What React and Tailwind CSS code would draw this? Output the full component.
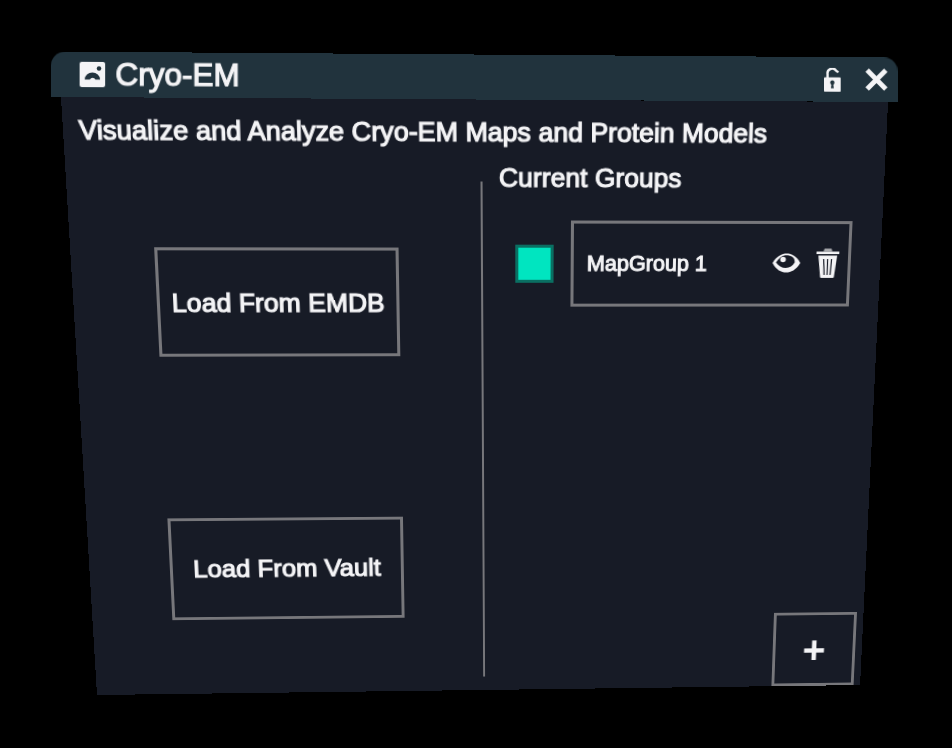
import React from "react";

// Maps a flat w×h element (at flow offset ox, oy) on to the quad it occupies in the perspective view.
function warp(w, h, ox, oy, q) {
  const [[x0, y0], [x1, y1], [x2, y2], [x3, y3]] = q.map(([x, y]) => [x - ox, y - oy]);
  const dx1 = x1 - x2, dx2 = x3 - x2, sx = x0 - x1 + x2 - x3;
  const dy1 = y1 - y2, dy2 = y3 - y2, sy = y0 - y1 + y2 - y3;
  const det = dx1 * dy2 - dx2 * dy1;
  const g = (sx * dy2 - dx2 * sy) / det;
  const k = (dx1 * sy - sx * dy1) / det;
  const a = x1 - x0 + g * x1, b = x3 - x0 + k * x3;
  const d = y1 - y0 + g * y1, e = y3 - y0 + k * y3;
  return {
    transform: `matrix3d(${[a / w, d / w, 0, g / w, b / h, e / h, 0, k / h, 0, 0, 1, 0, x0, y0, 0, 1].join(",")})`,
  };
}

const titleQuad = [[51, 51.5], [897.5, 57.5], [897.5, 102], [51, 97]];
const bodyQuad = [[61, 97], [888, 102], [860, 685], [97, 695]];

const ImageIcon = () => (
  <svg viewBox="0 0 25 25" className="w-[25px] h-[25px]">
    <rect width="25" height="25" rx="2" fill="#f4f4f6" />
    <path d="M5 17.5A7.5 7 0 0 1 20 17.5L15.5 17.5A3 3 0 0 0 10 17.5Z" fill="#21333d" />
    <circle cx="19" cy="6.5" r="2.2" fill="#21333d" />
  </svg>
);

const UnlockIcon = () => (
  <svg viewBox="0 0 17 24" className="w-[17px] h-[24px]">
    <path d="M3.6 10V6.2A4.8 4.8 0 0 1 12.2 2.6L14.6 4.4" fill="none" stroke="#f4f4f6" strokeWidth="2.4" />
    <rect y="9.5" width="17" height="14.5" rx="0.8" fill="#f4f4f6" />
    <circle cx="8.5" cy="14.8" r="2.2" fill="#21333d" />
    <path d="M7.8 15H9.2L10 20.5H7Z" fill="#21333d" />
  </svg>
);

const CloseIcon = () => (
  <svg viewBox="0 0 25 25" className="w-[25px] h-[25px]">
    <path d="M3 3L22 22M22 3L3 22" stroke="#f4f4f6" strokeWidth="5" />
  </svg>
);

const EyeIcon = () => (
  <svg viewBox="0 0 28 20" className="w-[28px] h-[20px]">
    <path d="M0 10C4 3 9 0.500 14 0.500C19 0.500 24 3 28 10C24 17 19 19.500 14 19.500C9 19.500 4 17 0 10Z" fill="#f4f4f6" />
    <path d="M3.500 9.500C6 5.500 9 2.800 12.500 2.200C15 1.900 18 2.500 20 4C21.800 5.400 22.500 7.500 22.300 9.500C20.500 12.800 17.500 15 13.500 15C9.500 15 6 13 3.500 9.500Z" fill="#171b26" />
    <circle cx="10.500" cy="6.500" r="2.800" fill="#f4f4f6" />
  </svg>
);

const TrashIcon = () => (
  <svg viewBox="0 0 23 30" className="w-[23px] h-[30px]">
    <path d="M8 0.500H15L16 3.500H7Z" fill="#a9aaad" />
    <rect y="3.500" width="23" height="2.500" fill="#f4f4f6" />
    <path d="M2 7.500H21L18.500 29Q18.400 30 17.500 30H5.500Q4.600 30 4.500 29Z" fill="#f4f4f6" />
    <path d="M7.500 11L8.500 27M11.500 11V27M15.500 11L14.500 27" stroke="#171b26" strokeWidth="1.200" />
  </svg>
);

function LoadButton({ children, className }) {
  return (
    <button className={`w-[238px] h-[109px] border-[3.5px] border-[#77777b] flex items-center justify-center text-[26px] tracking-[0.05px] text-[#f4f4f6] [-webkit-text-stroke:1.2px_#f4f4f6] ${className}`}>
      {children}
    </button>
  );
}

export default function App() {
  return (
    <div className="w-[952px] h-[748px] bg-black overflow-hidden font-['Liberation_Sans',Arial,sans-serif] text-[#f4f4f6]">
      <header
        className="w-[846px] h-[45px] bg-[#21333d] rounded-t-[14px] origin-top-left flex items-center pl-[28px] pr-[9px]"
        style={warp(846, 45, 0, 0, titleQuad)}
      >
        <ImageIcon />
        <h1 className="ml-[10px] text-[31px] leading-none [-webkit-text-stroke:1.2px_#f4f4f6]">Cryo-EM</h1>
        <div className="ml-auto flex items-center gap-[24px]">
          <UnlockIcon />
          <CloseIcon />
        </div>
      </header>

      <main
        className="w-[800px] h-[610px] bg-[#171b26] origin-top-left flex flex-col"
        style={warp(800, 610, 0, 45, bodyQuad)}
      >
        <h2 className="h-[60px] pt-[16px] pl-[15px] text-[26px] tracking-[0.04px] leading-[30px] whitespace-nowrap [-webkit-text-stroke:1.2px_#f4f4f6]">
          Visualize and Analyze Cryo-EM Maps and Protein Models
        </h2>
        <div className="flex-1 flex min-h-0">
          <div className="w-[400px] flex flex-col items-center pt-[84px]">
            <LoadButton className="pt-[1px]">Load From EMDB</LoadButton>
            <LoadButton className="mt-[167px]">Load From Vault</LoadButton>
          </div>
          <div className="w-[2px] mt-[19px] mb-[15px] bg-[#77777b]" />
          <div className="flex-1 flex flex-col pl-[16px] pt-[1px]">
            <h3 className="text-[26px] tracking-[0.05px] leading-[28px] [-webkit-text-stroke:1.1px_#f4f4f6]">Current Groups</h3>
            <div className="mt-[28px] ml-[16px] flex items-center gap-[17px]">
              <div className="w-[38px] h-[38px] bg-[#00e5c0] border-[3px] border-[#0a6f62]" />
              <div className="w-[281px] h-[86px] border-[3.5px] border-[#77777b] flex items-center pl-[13px] pr-[9px]">
                <span className="text-[21.6px] [-webkit-text-stroke:1px_#f4f4f6]">MapGroup 1</span>
                <div className="ml-auto flex items-center gap-[16px] mb-[2px]">
                  <EyeIcon />
                  <TrashIcon />
                </div>
              </div>
            </div>
            <button className="mt-auto self-end mr-[7px] w-[88px] h-[82px] border-[3.5px] border-[#77777b] flex items-center justify-center text-[42px] leading-none font-bold pt-[1px]">
              +
            </button>
          </div>
        </div>
      </main>
    </div>
  );
}
